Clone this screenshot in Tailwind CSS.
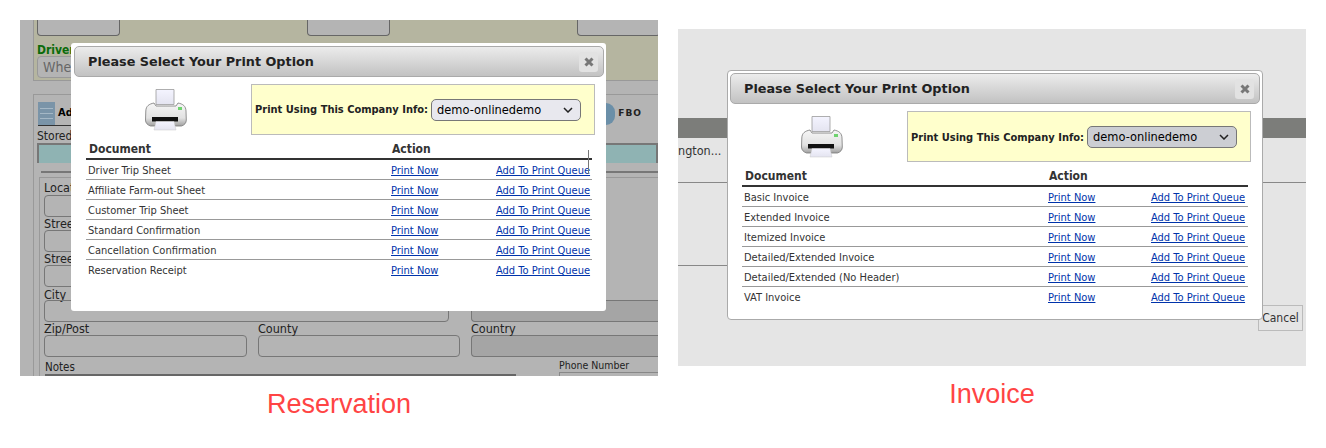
<!DOCTYPE html>
<html lang="en">
<head>
  <meta charset="UTF-8">
  <title>Print Options</title>
  <script src="https://cdn.jsdelivr.net/npm/@tailwindcss/browser@4"></script>
</head>
<body class="bg-white h-[448px] w-[1326px] overflow-hidden font-['DejaVu_Sans_Condensed','DejaVu_Sans',sans-serif] text-[11px] text-[#333]">
  <svg class="absolute w-0 h-0">
    <defs>
      <linearGradient id="body" x1="0" y1="0" x2="0" y2="1"><stop offset="0" stop-color="#f6f6f6"/><stop offset="0.65" stop-color="#e2e2e2"/><stop offset="1" stop-color="#a0a0a0"/></linearGradient>
      <linearGradient id="paper" x1="0" y1="0" x2="0" y2="1"><stop offset="0" stop-color="#f4f4ff"/><stop offset="1" stop-color="#e4e4f0"/></linearGradient>
      <symbol id="printer" viewBox="0 0 42 42">
        <path d="M11 .5h18v15H11z" fill="url(#paper)" stroke="#9a9a9a" stroke-width=".8"/>
        <path d="M9 14C4 15 1 17 .8 22L.5 31c0 3 2 5 5 6h31c3-1 4.800-3 4.800-6L41 22c-.2-5-3-7-8-8l-2 3H11z" fill="url(#body)" stroke="#777" stroke-width=".8"/>
        <path d="M7 28h26v4.500H7z" fill="#111"/>
        <path d="M11 32.500h18l2 8.500H9z" fill="url(#paper)" stroke="#c8c8c8" stroke-width=".5"/>
        <path d="M33 18h4v3h-4z" fill="#6fd36f"/>
      </symbol>
      <symbol id="close" viewBox="0 0 12 12">
        <path d="M2.500 2.500l7 7M9.500 2.500l-7 7" stroke="#777" stroke-width="3" fill="none"/>
      </symbol>
    </defs>
  </svg>

  <div class="flex items-start pl-5 pr-5">

    <!-- Reservation -->
    <div class="w-[638px] mt-5">
      <div class="relative h-[356px] bg-[#b4b4b4] overflow-hidden flex flex-col">
        <div class="ml-[13px] h-[61px] shrink-0 bg-[#b5b5a0] border-l border-b border-[#999] pl-[3px]">
          <div class="flex gap-[187px]">
            <div class="w-[83px] h-[16px] shrink-0 border border-t-0 border-[#666] rounded-b-sm bg-[#b4b4b4]"></div>
            <div class="w-[83px] h-[16px] shrink-0 border border-t-0 border-[#666] rounded-b-sm bg-[#b4b4b4]"></div>
            <div class="w-[83px] h-[16px] shrink-0 border border-t-0 border-[#666] rounded-b-sm bg-[#b4b4b4]"></div>
          </div>
          <p class="mt-[7px] font-bold text-[12px] leading-[14px] text-[#0a6b0a]">Driver</p>
          <div class="mt-[-1px] w-[200px] h-[22px] border border-[#999] rounded bg-[#b4b4b4] pl-[5px] text-[14px] leading-[20px] text-[#666]">Where</div>
        </div>

        <div class="ml-[13px] mt-[13px] flex-1 border-l border-t border-[#999] pl-[5px] text-[12.500px] text-[#222]">
          <div class="flex items-center justify-between h-[31px] pr-[16px]">
            <div class="flex items-center gap-[3px] pt-[7px] -ml-[1px] pr-[200px] border-b border-[#333]">
              <div class="w-[17px] h-[23px] bg-[#7a94a8] flex flex-col justify-center gap-[4px] px-[2px]">
                <div class="h-[1px] bg-[#a5b8c6]"></div>
                <div class="h-[1px] bg-[#a5b8c6]"></div>
                <div class="h-[1px] bg-[#a5b8c6]"></div>
              </div>
              <span class="font-bold text-[11px] text-black">Address</span>
            </div>
            <div class="flex items-center gap-[3px] pt-[7px]">
              <div class="w-[18px] h-[22px] rounded-full bg-[#6b8fa8]"></div>
              <span class="font-['DejaVu_Sans',sans-serif] font-bold text-[9px] tracking-[1px] text-[#222]">FBO</span>
            </div>
          </div>
          <p class="leading-[14px] mt-[3px] -ml-[2px] text-[12px]">Stored</p>
          <div class="-ml-[2px] h-[20px] bg-[#8fb3b3] border-2 border-b-0 border-[#777]"></div>
          <div class="mt-[8px] ml-[2px] h-[2px] bg-[#777]"></div>
          <div class="mt-[4px] border-l border-t border-[#999] pl-[4px] pt-[3px]">
            <p class="leading-[14px]">Location</p>
            <div class="h-[22px] w-[250px] border border-[#777] rounded-sm"></div>
            <p class="leading-[13px]">Street</p>
            <div class="h-[22px] w-[250px] border border-[#777] rounded-sm"></div>
            <p class="leading-[13px]">Street</p>
            <div class="h-[22px] w-[250px] border border-[#777] rounded-sm"></div>
            <p class="leading-[13px] pt-[1px] h-[13px]">City</p>
            <div class="flex gap-[22px]">
              <div class="h-[22px] w-[405px] shrink-0 border border-[#777] rounded-sm"></div>
              <div class="h-[22px] flex-1 border border-r-0 border-[#777] rounded-l-sm bg-[#a5a5a5]"></div>
            </div>
            <div class="flex gap-[11px] leading-[13px]">
              <div class="w-[203px] shrink-0">
                <p>Zip/Post</p>
                <div class="h-[22px] border border-[#777] rounded-sm"></div>
              </div>
              <div class="w-[202px] shrink-0">
                <p>County</p>
                <div class="h-[22px] border border-[#777] rounded-sm"></div>
              </div>
              <div class="flex-1">
                <p>Country</p>
                <div class="h-[22px] border border-r-0 border-[#777] rounded-l-sm bg-[#a5a5a5]"></div>
              </div>
            </div>
            <div class="flex mt-[3px] pl-[1px]">
              <div class="w-[471px] shrink-0">
                <p class="leading-[14px] text-[11.500px]">Notes</p>
                <div class="h-[2px] bg-[#666]"></div>
              </div>
              <div class="ml-[43px] -mt-[1px] flex-1">
                <p class="leading-[13px] text-[10.500px] whitespace-nowrap">Phone Number</p>
                <div class="h-[4px] border-t border-l border-[#888]"></div>
              </div>
            </div>
          </div>
        </div>

        <!-- dialog -->
        <div class="absolute left-[51px] top-[23px] w-[535px] h-[268px] bg-white rounded-[3px] p-[3px] pr-[2px] text-[#333] text-[11px]">
          <div class="relative h-[31px] flex items-center pl-[13px] rounded-[5px] border border-[#aaa] bg-linear-to-b from-[#ececec] to-[#c2c2c2]">
            <span class="font-['DejaVu_Sans',sans-serif] font-bold text-[12.800px] text-[#222]">Please Select Your Print Option</span>
            <div class="absolute right-[5px] top-[5px] w-[19px] h-[20px] rounded-[3px] bg-[#e2e2e2] flex items-center justify-center">
              <svg class="w-[12px] h-[12px]"><use href="#close"/></svg>
            </div>
          </div>
          <div class="flex mt-[7px] ml-[12px]">
            <div class="w-[165px] shrink-0 flex justify-center pt-[5px]">
              <svg class="w-[42px] h-[42px] ml-[-6px]"><use href="#printer"/></svg>
            </div>
            <div class="w-[344px] h-[51px] flex items-center pl-[3px] bg-[#ffffcc] border border-[#bbb]">
              <span class="pt-[2px] font-bold text-[11px] text-[#222] whitespace-nowrap">Print Using This Company Info:</span>
              <div class="ml-[3px] w-[150px] h-[22px] flex items-center justify-between px-[5px] rounded-[5px] border border-[#777] bg-[#e8e8ee] text-[12.700px] text-black">
                <span>demo-onlinedemo</span>
                <svg class="w-[10px] h-[6px] mr-[2px]" viewBox="0 0 10 6"><path d="M1 1l4 4 4-4" fill="none" stroke="#222" stroke-width="1.500"/></svg>
              </div>
            </div>
          </div>
          <div class="relative ml-[12px] w-[506px] mt-[3px]">
            <div class="grid grid-cols-[303px_1fr] h-[22px] pt-[2px] border-b-[2px] border-[#333] font-bold text-[12px] items-center pl-[3px]">
              <span>Document</span>
              <span>Action</span>
            </div>
            <div class="grid grid-cols-[303px_105px_98px] h-[20px] pt-[3px] items-center border-b border-[#999] pl-[2px]"><span>Driver Trip Sheet</span><a href="#" class="text-[#0033aa] underline">Print Now</a><a href="#" class="text-[#0033aa] underline whitespace-nowrap">Add To Print Queue</a></div>
            <div class="grid grid-cols-[303px_105px_98px] h-[20px] pt-[3px] items-center border-b border-[#999] pl-[2px]"><span>Affiliate Farm-out Sheet</span><a href="#" class="text-[#0033aa] underline">Print Now</a><a href="#" class="text-[#0033aa] underline whitespace-nowrap">Add To Print Queue</a></div>
            <div class="grid grid-cols-[303px_105px_98px] h-[20px] pt-[3px] items-center border-b border-[#999] pl-[2px]"><span>Customer Trip Sheet</span><a href="#" class="text-[#0033aa] underline">Print Now</a><a href="#" class="text-[#0033aa] underline whitespace-nowrap">Add To Print Queue</a></div>
            <div class="grid grid-cols-[303px_105px_98px] h-[20px] pt-[3px] items-center border-b border-[#999] pl-[2px]"><span>Standard Confirmation</span><a href="#" class="text-[#0033aa] underline">Print Now</a><a href="#" class="text-[#0033aa] underline whitespace-nowrap">Add To Print Queue</a></div>
            <div class="grid grid-cols-[303px_105px_98px] h-[20px] pt-[3px] items-center border-b border-[#999] pl-[2px]"><span>Cancellation Confirmation</span><a href="#" class="text-[#0033aa] underline">Print Now</a><a href="#" class="text-[#0033aa] underline whitespace-nowrap">Add To Print Queue</a></div>
            <div class="grid grid-cols-[303px_105px_98px] h-[20px] pt-[3px] items-center border-b border-transparent pl-[2px]"><span>Reservation Receipt</span><a href="#" class="text-[#0033aa] underline">Print Now</a><a href="#" class="text-[#0033aa] underline whitespace-nowrap">Add To Print Queue</a></div>
            <div class="absolute left-[502px] top-[12px] w-[1px] h-[24px] bg-[#777]"></div>
          </div>
        </div>
      </div>
      <p class="mt-[12px] text-center font-['Liberation_Sans',sans-serif] text-[27px] leading-[32px] text-[#ff4444]">Reservation</p>
    </div>

    <!-- Invoice -->
    <div class="w-[628px] ml-[20px] mt-[29px]">
      <div class="relative h-[337px] bg-[#e5e5e5] overflow-hidden flex flex-col">
        <div class="mt-[89px] h-[20px] shrink-0 bg-[#7c7d7a]"></div>
        <p class="h-[45px] border-b border-[#888] pt-[4px] leading-[18px] text-[#333] text-[12.500px] whitespace-nowrap">ngton...</p>
        <div class="h-[83px] w-[60px] shrink-0 border-b border-[#888]"></div>
        <div class="flex justify-end pr-[3px] pt-[39px]">
          <button class="w-[45px] h-[26px] border border-[#bbb] bg-[#e5e5e5] text-[#333] text-[12px]">Cancel</button>
        </div>

        <!-- dialog -->
        <div class="absolute left-[49px] top-[41px] w-[536px] h-[250px] bg-white border border-[#aaa] rounded-[4px] p-[2px]">
          <div class="relative h-[31px] flex items-center pl-[13px] pt-[1px] rounded-[5px] border border-[#aaa] bg-linear-to-b from-[#ececec] to-[#c2c2c2]">
            <span class="font-['DejaVu_Sans',sans-serif] font-bold text-[12.800px] text-[#222]">Please Select Your Print Option</span>
            <div class="absolute right-[5px] top-[5px] w-[19px] h-[20px] rounded-[3px] bg-[#e2e2e2] flex items-center justify-center">
              <svg class="w-[12px] h-[12px]"><use href="#close"/></svg>
            </div>
          </div>
          <div class="flex mt-[7px] ml-[12px]">
            <div class="w-[165px] shrink-0 flex justify-center pt-[5px]">
              <svg class="w-[42px] h-[42px] ml-[-6px]"><use href="#printer"/></svg>
            </div>
            <div class="w-[344px] h-[51px] flex items-center pl-[3px] bg-[#ffffcc] border border-[#bbb]">
              <span class="pt-[3px] font-bold text-[11px] text-[#222] whitespace-nowrap">Print Using This Company Info:</span>
              <div class="ml-[3px] w-[150px] h-[22px] flex items-center justify-between px-[5px] rounded-[5px] border border-[#777] bg-[#ccced3] text-[12.700px] text-black">
                <span>demo-onlinedemo</span>
                <svg class="w-[10px] h-[6px] mr-[2px]" viewBox="0 0 10 6"><path d="M1 1l4 4 4-4" fill="none" stroke="#222" stroke-width="1.500"/></svg>
              </div>
            </div>
          </div>
          <div class="ml-[12px] w-[506px] mt-[3px]">
            <div class="grid grid-cols-[304px_1fr] h-[22px] pt-[2px] border-b-[2px] border-[#333] font-bold text-[12px] items-center pl-[3px]">
              <span>Document</span>
              <span>Action</span>
            </div>
            <div class="grid grid-cols-[304px_103px_99px] h-[20px] pt-[3px] items-center border-b border-[#999] pl-[2px]"><span>Basic Invoice</span><a href="#" class="text-[#0033aa] underline">Print Now</a><a href="#" class="text-[#0033aa] underline whitespace-nowrap">Add To Print Queue</a></div>
            <div class="grid grid-cols-[304px_103px_99px] h-[20px] pt-[3px] items-center border-b border-[#999] pl-[2px]"><span>Extended Invoice</span><a href="#" class="text-[#0033aa] underline">Print Now</a><a href="#" class="text-[#0033aa] underline whitespace-nowrap">Add To Print Queue</a></div>
            <div class="grid grid-cols-[304px_103px_99px] h-[20px] pt-[3px] items-center border-b border-[#999] pl-[2px]"><span>Itemized Invoice</span><a href="#" class="text-[#0033aa] underline">Print Now</a><a href="#" class="text-[#0033aa] underline whitespace-nowrap">Add To Print Queue</a></div>
            <div class="grid grid-cols-[304px_103px_99px] h-[20px] pt-[3px] items-center border-b border-[#999] pl-[2px]"><span>Detailed/Extended Invoice</span><a href="#" class="text-[#0033aa] underline">Print Now</a><a href="#" class="text-[#0033aa] underline whitespace-nowrap">Add To Print Queue</a></div>
            <div class="grid grid-cols-[304px_103px_99px] h-[20px] pt-[3px] items-center border-b border-[#999] pl-[2px]"><span>Detailed/Extended (No Header)</span><a href="#" class="text-[#0033aa] underline">Print Now</a><a href="#" class="text-[#0033aa] underline whitespace-nowrap">Add To Print Queue</a></div>
            <div class="grid grid-cols-[304px_103px_99px] h-[20px] pt-[3px] items-center border-b border-transparent pl-[2px]"><span>VAT Invoice</span><a href="#" class="text-[#0033aa] underline">Print Now</a><a href="#" class="text-[#0033aa] underline whitespace-nowrap">Add To Print Queue</a></div>
          </div>
        </div>
      </div>
      <p class="mt-[12px] text-center font-['Liberation_Sans',sans-serif] text-[27px] leading-[32px] text-[#ff4444]">Invoice</p>
    </div>

  </div>
</body>
</html>
